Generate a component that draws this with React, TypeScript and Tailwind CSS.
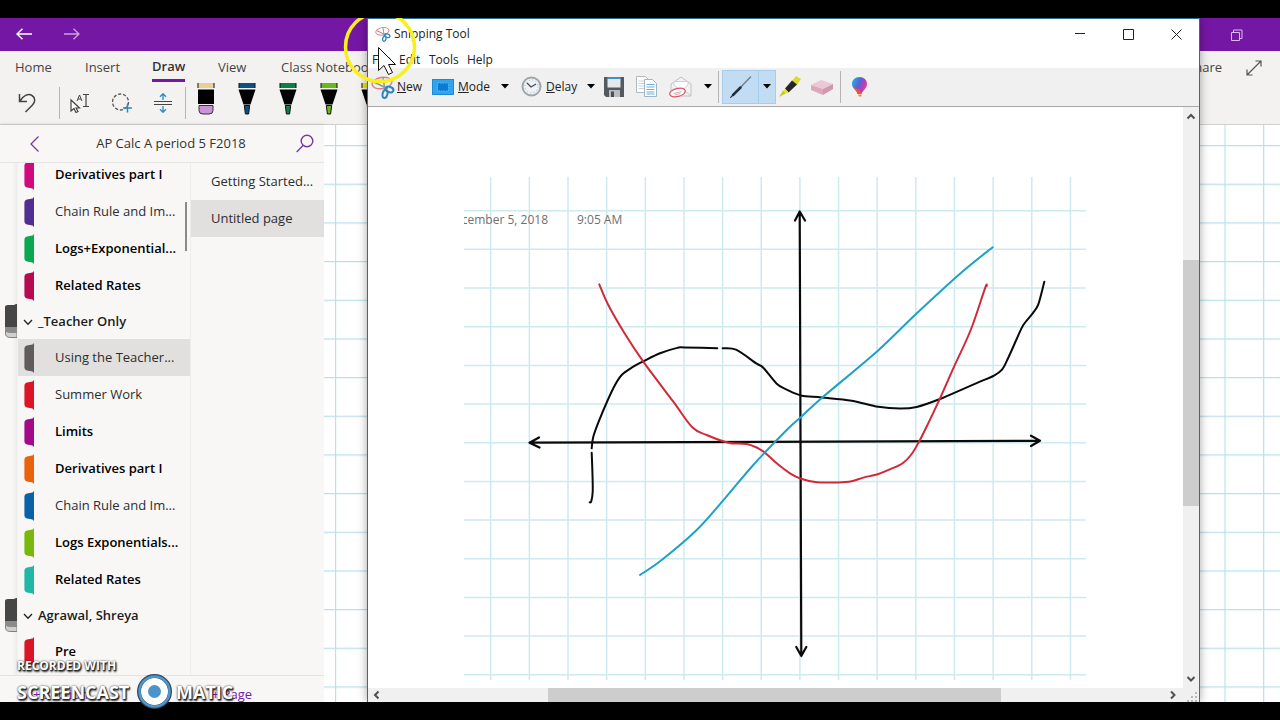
import type { ReactNode } from 'react'

type Point = [number, number]

const GRID = 38.67

// Catmull-Rom spline through the sampled ink points
function inkPath(points: Point[]) {
  let d = `M${points[0][0]} ${points[0][1]}`
  for (let i = 0; i < points.length - 1; i++) {
    const p0 = points[Math.max(i - 1, 0)]
    const p1 = points[i]
    const p2 = points[i + 1]
    const p3 = points[Math.min(i + 2, points.length - 1)]
    d += ` C${p1[0] + (p2[0] - p0[0]) / 6} ${p1[1] + (p2[1] - p0[1]) / 6} ${p2[0] - (p3[0] - p1[0]) / 6} ${p2[1] - (p3[1] - p1[1]) / 6} ${p2[0]} ${p2[1]}`
  }
  return d
}

const strokes: { color: string; points: Point[] }[] = [
  {
    color: '#0a0a0a',
    points: [[591.7, 448.3], [593.3, 436.7], [600, 418.3], [613.3, 388.3], [621.7, 375], [633.3, 366.7], [644, 361], [660, 353.3], [677.3, 347.9], [685, 347.5], [717.3, 348.3]],
  },
  {
    color: '#0a0a0a',
    points: [[722.7, 348.3], [736, 349.7], [756.7, 363.7], [763.3, 367.7], [776.7, 383.7], [786.7, 389.6], [801, 395.4], [821.7, 397.4], [851.7, 400.7], [878.3, 406.8], [900, 408.6], [916.7, 407], [940, 399], [960, 390.3], [980, 381.7], [993.3, 376], [1002, 369.7], [1008.3, 357.7], [1016.7, 339], [1023.3, 325], [1032.7, 313.3], [1038.3, 304.3], [1044.3, 281.7]],
  },
  { color: '#0a0a0a', points: [[591.7, 452.7], [592.5, 475], [592.7, 491.7], [591.3, 501.3], [589.7, 502.3]] },
  {
    color: '#d02a3a',
    points: [[599.3, 284.3], [608.3, 305], [625, 334], [644, 362.7], [673.3, 401.7], [692.3, 427.3], [706.7, 435], [728.3, 442.7], [746.7, 444], [758.3, 448.3], [765, 452.7], [776.7, 463.3], [790, 473.3], [801, 478.7], [816.7, 482.2], [838, 482.4], [851.7, 481.2], [863.3, 477.6], [878.3, 474], [890, 469.3], [902.7, 463.3], [911.7, 454], [919, 441.7], [925, 430], [940, 398.3], [953.3, 368.3], [970.7, 330], [985, 288.3], [986.7, 286]],
  },
  {
    color: '#1fa0c8',
    points: [[640, 575], [661.7, 560], [696.7, 530], [725, 498.3], [753.3, 465], [786.7, 430], [801, 417], [821.7, 398], [876.7, 351.7], [915, 315], [961.7, 272.3], [992.7, 247.3]],
  },
]

const sections = [
  { name: 'Derivatives part I', color: '#cf0a7c', bold: true },
  { name: 'Chain Rule and Im...', color: '#522e91' },
  { name: 'Logs+Exponential...', color: '#0ba84f', bold: true },
  { name: 'Related Rates', color: '#b80a50', bold: true },
  { name: '_Teacher Only', group: true },
  { name: 'Using the Teacher...', color: '#5f5c5b', selected: true },
  { name: 'Summer Work', color: '#dc1428' },
  { name: 'Limits', color: '#a20a8a', bold: true },
  { name: 'Derivatives part I', color: '#e8630c', bold: true },
  { name: 'Chain Rule and Im...', color: '#0a61a8' },
  { name: 'Logs Exponentials...', color: '#79b80a', bold: true },
  { name: 'Related Rates', color: '#1fb8a6', bold: true },
  { name: 'Agrawal, Shreya', group: true },
  { name: 'Pre', color: '#dc1428', bold: true },
]

const pens = ['#0b4f8a', '#0b8048', '#66bb1a', '#e8e80c']

function Separator() {
  return <div className="h-8 w-px shrink-0 bg-[#b4b4b4]" />
}

function IconButton({ label, className, children }: { label: string; className: string; children: ReactNode }) {
  return (
    <button type="button" aria-label={label} className={`flex shrink-0 items-center justify-center ${className}`}>
      {children}
    </button>
  )
}

function Pen({ color }: { color: string }) {
  return (
    <svg width="18" height="32" viewBox="0 0 18 32">
      <path d="M1 0h16v5H1z" fill={color} />
      <path d="M1 0v5M17 0v5" stroke="#111" strokeWidth="1" />
      <path d="M.500 6.500h17l-5 15h-7z" fill="#000" />
      <path d="M6.300 22.500h5.400L10.600 31H7.400z" fill={color} stroke="#111" strokeWidth="1" />
    </svg>
  )
}

function Scissors({ size }: { size: number }) {
  return (
    <svg width={size} height={size} viewBox="0 0 24 24" fill="none">
      <ellipse cx="11" cy="8" rx="10" ry="5.6" stroke="#e0807c" strokeWidth="1.4" transform="rotate(-10 11 8)" />
      <path d="M3 7l14 7M12 3l2 12" stroke="#8d9aa5" strokeWidth="1.6" />
      <ellipse cx="18.5" cy="14.5" rx="4" ry="2.6" stroke="#2f85bd" strokeWidth="2" transform="rotate(20 18.5 14.5)" />
      <ellipse cx="14" cy="19" rx="2.4" ry="4" stroke="#2f85bd" strokeWidth="2" transform="rotate(12 14 19)" />
    </svg>
  )
}

function DropArrow() {
  return (
    <svg width="8" height="5" viewBox="0 0 8 5" className="shrink-0">
      <path d="M0 0h8L4 4.5z" fill="#000" />
    </svg>
  )
}

function GroupIcon() {
  return (
    <svg width="12" height="35" viewBox="0 0 12 35" className="ml-[5px]">
      <path d="M.5 24v5c0 3 1 4 4 4.500H12V22z" fill="#cfcfcf" stroke="#808080" strokeWidth="1" />
      <path d="M0 20v6c1 2 2 3 5 3h7V18z" fill="#8b8b8b" />
      <path d="M0 3q0-2 3-2h6l3-1.500V23H0z" fill="#464646" />
    </svg>
  )
}

function SectionRow({ section }: { section: (typeof sections)[number] }) {
  if (section.group) {
    return (
      <li className="flex h-[35px] shrink-0 items-center">
        <div className="flex h-full w-[18px] shrink-0 items-center">
          <GroupIcon />
        </div>
        <button type="button" className="flex items-center gap-1 pl-1 font-semibold text-[#1c1c1c]">
          <svg width="12" height="12" viewBox="0 0 12 12" fill="none" stroke="#222" strokeWidth="1.3">
            <path d="M2 4l4 4.2L10 4" />
          </svg>
          {section.name}
        </button>
      </li>
    )
  }
  return (
    <li className="flex h-[37px] shrink-0">
      <div className="w-[18px] shrink-0" />
      <button
        type="button"
        className={`flex min-w-0 flex-1 items-center gap-[21px] pl-[6px] text-left whitespace-nowrap ${section.selected ? 'bg-[#e1e0df]' : ''} ${section.bold ? 'font-semibold text-black' : 'text-[#2d2d2d]'}`}
      >
        <svg width="10" height="30" viewBox="0 0 10 30" className="shrink-0">
          <path d="M10 0v30l-1.500-1.500-5.500-1C1.200 27 .4 26 .4 24V6C.4 4 1.200 3 3 2.500l5.500-1z" fill={section.color} />
        </svg>
        {section.name}
      </button>
    </li>
  )
}

function GridPaper() {
  return (
    <svg className="h-full w-full">
      <defs>
        <pattern id="paper" width={GRID} height={GRID} x="11" y="20" patternUnits="userSpaceOnUse">
          <path d={`M0 .5H${GRID}M.5 0V${GRID}`} stroke="#b9e0ea" strokeWidth="1.4" />
        </pattern>
      </defs>
      <rect width="100%" height="100%" fill="#fff" />
      <rect width="100%" height="100%" fill="url(#paper)" />
    </svg>
  )
}

function OneNote() {
  return (
    <div className="flex h-full flex-col bg-[#f3f2f1]">
      <header className="flex h-[33px] shrink-0 items-center justify-between bg-[#7417a5]">
        <div className="flex gap-8 pb-px pl-4">
          <IconButton label="Back" className="size-4">
            <svg width="16" height="12" viewBox="0 0 16 12" fill="none" stroke="#fff" strokeWidth="1.5">
              <path d="M16 6H1M6.500.7L1 6l5.500 5.300" />
            </svg>
          </IconButton>
          <IconButton label="Forward" className="size-4">
            <svg width="16" height="12" viewBox="0 0 16 12" fill="none" stroke="#cda3e0" strokeWidth="1.3">
              <path d="M0 6h15M9.500.7L15 6l-5.500 5.300" />
            </svg>
          </IconButton>
        </div>
        <div className="flex gap-9 overflow-hidden">
          <IconButton label="Restore" className="size-3">
            <svg width="12" height="12" viewBox="0 0 12 12" fill="none" stroke="#dcb8ec" strokeWidth="1">
              <path d="M.5 3.500h8v8h-8zM2.500 3.500v-2.500h8.500v8.500H8.500" />
            </svg>
          </IconButton>
          <div className="w-px" />
        </div>
      </header>
      <nav className="flex h-[31px] shrink-0 items-center justify-between pt-[2px] text-[13px] text-[#444]">
        <div className="flex h-full items-center pl-[15px]">
          <button type="button" className="w-[70px] text-left">Home</button>
          <button type="button" className="w-[67px] text-left">Insert</button>
          <div className="flex h-full w-[66px]">
            <button type="button" className="border-b-[3px] border-[#7417a5] pt-px font-semibold text-[#333]">
              Draw
            </button>
          </div>
          <button type="button" className="w-[63px] text-left">View</button>
          <button type="button" className="whitespace-nowrap">Class Notebook</button>
        </div>
        <div className="flex items-center gap-6 pr-[18px]">
          <button type="button">Share</button>
          <IconButton label="Full screen" className="size-4">
            <svg width="16" height="16" viewBox="0 0 16 16" fill="none" stroke="#555" strokeWidth="1.2">
              <path d="M1 15L15 1M9.500 1H15v5.500M1 9.500V15h5.500" />
            </svg>
          </IconButton>
        </div>
      </nav>
      <div className="flex h-[43px] shrink-0 items-center border-b border-[#d2d0ce]">
        <IconButton label="Undo" className="ml-[18px] mr-[23px] size-[18px]">
          <svg width="18" height="20" viewBox="0 0 18 20" fill="none" stroke="#444" strokeWidth="1.5">
            <path d="M1.500 1v7.500H9M2 8C5 3 10 0 14 2.500c4 2.500 3 7 .5 9.500L7.500 19" />
          </svg>
        </IconButton>
        <Separator />
        <IconButton label="Select text" className="ml-[10px] mr-[22px] size-5">
          <svg width="20" height="20" viewBox="0 0 20 20" fill="none" stroke="#444" strokeWidth="1.2">
            <path d="M1 7v11l3-2.500 2 4 2-1-2-3.500h3.500z" fill="#fff" />
            <path d="M7 8L9.500 2 12 8M8 6h3" strokeWidth="1" />
            <path d="M13 1.500h6M13 13.500h6M16 1.500v12" />
          </svg>
        </IconButton>
        <IconButton label="Lasso select" className="mr-[21px] size-5">
          <svg width="20" height="20" viewBox="0 0 20 20" fill="none">
            <circle cx="8.500" cy="9" r="8" stroke="#555" strokeWidth="1.300" strokeDasharray="3.200 1.800" />
            <path d="M15.500 10.500v9M11 15h9" stroke="#2b88c8" strokeWidth="1.500" />
          </svg>
        </IconButton>
        <IconButton label="Insert space" className="mr-[12px] size-5">
          <svg width="20" height="20" viewBox="0 0 20 20" fill="none">
            <path d="M1 8.500h18M1 11.500h18" stroke="#444" strokeWidth="1.200" />
            <path d="M10 7V1M7 3.700L10 .7l3 3M10 13v6M7 16.300l3 3 3-3" stroke="#2b88c8" strokeWidth="1.300" />
          </svg>
        </IconButton>
        <Separator />
        <div className="flex gap-[23px] self-start pl-[11px] pt-px">
          <IconButton label="Eraser" className="w-[18px]">
            <svg width="18" height="32" viewBox="0 0 18 32">
              <path d="M1 0h16v5H1z" fill="#e8cf94" />
              <path d="M1 0v5M17 0v5" stroke="#111" />
              <path d="M1 6.500h16V21H1z" fill="#000" />
              <path d="M2 22.500h14v5q0 3.500-4 3.500H6q-4 0-4-3.500z" fill="#cb93d6" stroke="#333" />
            </svg>
          </IconButton>
          {pens.map((color) => (
            <IconButton key={color} label="Pen" className="w-[18px]">
              <Pen color={color} />
            </IconButton>
          ))}
        </div>
      </div>
      <div className="flex min-h-0 flex-1">
        <aside className="flex w-[324px] shrink-0 flex-col bg-[#f8f7f6] text-[13px] shadow-[1px_0_4px_rgba(0,0,0,0.15)]">
          <div className="flex h-[38px] shrink-0 items-center justify-between border-b border-[#e6e5e4] pl-[28px] pr-[10px]">
            <IconButton label="Show notebooks" className="size-3">
              <svg width="9" height="16" viewBox="0 0 9 16" fill="none" stroke="#7a3a9c" strokeWidth="1.300" className="shrink-0">
                <path d="M8.500.5L1 8l7.500 7.500" />
              </svg>
            </IconButton>
            <h1 className="pt-px pl-[6px] text-[#333]">AP Calc A period 5 F2018</h1>
            <IconButton label="Search" className="size-[18px]">
              <svg width="18" height="19" viewBox="0 0 18 19" fill="none" stroke="#7a3a9c" strokeWidth="1.400">
                <circle cx="11" cy="7" r="5.800" />
                <path d="M7 11.500L.7 18" />
              </svg>
            </IconButton>
          </div>
          <div className="flex min-h-0 flex-1">
            <div className="relative flex w-[190px] shrink-0 overflow-hidden bg-linear-to-r from-[#f8f7f6] from-[12px] to-[#f8f7f6] to-[18px] via-[#ececeb] via-[17px]">
              <ul className="-mt-[7px] w-full">
                {sections.map((section, i) => (
                  <SectionRow key={i} section={section} />
                ))}
              </ul>
              <div className="absolute top-[39px] right-[3px] h-[49px] w-[2px] bg-[#8a8a8a]" />
            </div>
            <ul className="flex-1 border-l border-[#ececeb] text-[#2d2d2d]">
              <li className="flex h-[37px] items-center pl-5">
                <a href="#getting-started">Getting Started...</a>
              </li>
              <li className="flex h-[37px] items-center bg-[#e1e0df] pl-5">
                <a href="#untitled">Untitled page</a>
              </li>
            </ul>
          </div>
          <div className="flex h-[27px] shrink-0 items-end border-t border-[#e3e2e1] pb-px pl-[33px] text-[#7719aa]">
            <div className="flex-1">
              <button type="button" className="block leading-[14px]">+ Section</button>
            </div>
            <button type="button" className="mr-[72px] block leading-[14px]">+ Page</button>
          </div>
        </aside>
        <div className="min-w-0 flex-1">
          <GridPaper />
        </div>
      </div>
    </div>
  )
}

function Drawing() {
  const cols = Array.from({ length: 16 }, (_, i) => 490.7 + i * 38.65)
  const rows = Array.from({ length: 13 }, (_, i) => 210.7 + i * 38.67)
  return (
    <svg width="622" height="503" viewBox="464 177 622 503" fill="none" className="shrink-0">
      <g stroke="#cdeaf1" strokeWidth="1.500">
        {cols.map((x) => (
          <path key={x} d={`M${x} 177V680`} />
        ))}
        {rows.map((y) => (
          <path key={y} d={`M464 ${y}H1086`} />
        ))}
      </g>
      <text x="548" y="224" textAnchor="end" fontSize="12" fill="#707070">
        cember 5, 2018
      </text>
      <text x="577" y="224" fontSize="12" fill="#707070">
        9:05 AM
      </text>
      <g stroke="#0a0a0a" strokeWidth="2.200" strokeLinecap="round" strokeLinejoin="round">
        <path d="M529.500 442.700L1040 440.700M539 437.500L529.500 442.700 539.500 447.500M1031 435.700L1040 440.700 1031 446" />
        <path d="M799.700 211.500L801.300 656M795 220.500L799.700 211.500 805 220.500M796.300 647L801.300 656 806.300 647" />
      </g>
      {strokes.map((stroke, i) => (
        <path key={i} d={inkPath(stroke.points)} stroke={stroke.color} strokeWidth="2" strokeLinecap="round" strokeLinejoin="round" />
      ))}
    </svg>
  )
}

function SnippingTool() {
  return (
    <section className="absolute inset-y-0 right-[80px] left-[367px] flex flex-col border-x border-t border-[#2f6d99] bg-white text-[12px] text-[#222] shadow-[0_0_9px_rgba(0,0,0,0.35)]">
      <header className="flex h-[30px] shrink-0 items-center justify-between pr-[17px] pl-[7px]">
        <div className="flex items-center gap-[3px]">
          <Scissors size={16} />
          <h2>Snipping Tool</h2>
        </div>
        <div className="flex gap-[36px]">
          <IconButton label="Minimize" className="size-3">
            <svg width="10" height="10" viewBox="0 0 10 10" stroke="#222">
              <path d="M0 4.500h10" />
            </svg>
          </IconButton>
          <IconButton label="Maximize" className="size-3">
            <svg width="11" height="11" viewBox="0 0 11 11" stroke="#222" fill="none">
              <path d="M.5.5h10v10H.5z" />
            </svg>
          </IconButton>
          <IconButton label="Close" className="size-3">
            <svg width="11" height="11" viewBox="0 0 11 11" stroke="#222">
              <path d="M.5.5l10 10M10.500.5l-10 10" />
            </svg>
          </IconButton>
        </div>
      </header>
      <nav className="flex h-[19px] shrink-0 items-center pt-[2px] pl-1">
        <button type="button" className="w-[27px] text-left">File</button>
        <button type="button" className="w-[30px] text-left">Edit</button>
        <button type="button" className="w-[38px] text-left">Tools</button>
        <button type="button" className="text-left">Help</button>
      </nav>
      <div className="flex h-[39px] shrink-0 items-center border-b border-[#a8a8a8] bg-[#f0f0f0] pb-px pl-[3px]">
        <button type="button" className="flex w-[61px] items-center gap-[2px]">
          <Scissors size={24} />
          <span>
            <u>N</u>ew
          </span>
        </button>
        <button type="button" className="flex w-[89px] items-center gap-1">
          <svg width="22" height="16" viewBox="0 0 22 16" className="shrink-0">
            <path d="M0 0h22v16H0z" fill="#2fa5f0" />
            <path d="M.5.5h21v15H.5z" fill="none" stroke="#1e8ad6" />
            <path d="M5.500 4h11v8h-11z" fill="#0c7bd0" stroke="#5fb8f2" strokeDasharray="1.500 1" />
          </svg>
          <span className="w-[39px] text-left">
            <u>M</u>ode
          </span>
          <DropArrow />
        </button>
        <button type="button" className="flex w-[80px] items-center gap-1">
          <svg width="21" height="21" viewBox="0 0 21 21" className="shrink-0" fill="none">
            <circle cx="10.500" cy="10.500" r="9" fill="#eef2f4" stroke="#9fa6aa" strokeWidth="2" />
            <circle cx="10.500" cy="10.500" r="6.500" stroke="#9bb2bf" strokeDasharray="1 2.400" />
            <path d="M6 7l4 4 5-3" stroke="#445" strokeWidth="1.200" />
          </svg>
          <span className="w-[37px] text-left">
            <u>D</u>elay
          </span>
          <DropArrow />
        </button>
        <IconButton label="Save snip" className="w-[26px]">
          <svg width="20" height="20" viewBox="0 0 20 20">
            <path d="M0 0h20v20H2l-2-2z" fill="#555a60" />
            <path d="M3.500 1.500h13v9h-13z" fill="#e4e8ea" />
            <path d="M3.500 0h13v2h-13z" fill="#3e8fc4" />
            <path d="M5 13h11v7H5z" fill="#b9bdc0" />
            <path d="M7 14.500h3V20H7z" fill="#4b4f54" />
          </svg>
        </IconButton>
        <IconButton label="Copy" className="ml-[3px] w-[32px]">
          <svg width="21" height="21" viewBox="0 0 21 21" fill="#fff">
            <path d="M.5.5h9l3 3v13H.5z" stroke="#b0bac2" />
            <path d="M2.500 5h8M2.500 7.500h8M2.500 10h8M2.500 12.500h8" stroke="#c9d3da" />
            <path d="M8.500 3.500h8l4 4v13h-12z" stroke="#9cb4c6" />
            <path d="M10.500 8.500h8M10.500 11h8M10.500 13.500h8M10.500 16h8M10.500 18h8" stroke="#6faed6" />
          </svg>
        </IconButton>
        <button type="button" aria-label="Send snip" className="ml-[7px] flex w-[49px] items-center gap-[12px]">
          <svg width="23" height="22" viewBox="0 0 23 22" className="shrink-0">
            <path d="M2 8L12 1l10 7v12H2z" fill="#f3f3f3" stroke="#c0c0c0" />
            <path d="M5 9V5.500h14V9l-7 6z" fill="#fff" stroke="#d0d0d0" />
            <path d="M2 20l8-7h4l8 7" fill="none" stroke="#c4c4c4" />
            <ellipse cx="8.500" cy="16.500" rx="8" ry="4" fill="#fff" stroke="#d45a6c" strokeWidth="1.300" transform="rotate(-14 8.500 16.500)" />
            <path d="M4.500 17.500l8-2M5.500 19l6-1.500" stroke="#e3a4ac" />
          </svg>
          <DropArrow />
        </button>
        <Separator />
        <div className="ml-[3px] flex h-[34px] w-[54px] border border-[#a6cdec] bg-[#c2dcf3]">
          <IconButton label="Pen" className="w-9 border-r border-[#a6cdec]">
            <svg width="22" height="22" viewBox="0 0 22 22" strokeLinecap="round">
              <path d="M8 14L20.500 1" stroke="#77818a" strokeWidth="1.500" />
              <path d="M3 19L10.500 11.500" stroke="#20303e" strokeWidth="2.500" />
              <path d="M.700 21.300L3 19" stroke="#20303e" strokeWidth="1.200" />
            </svg>
          </IconButton>
          <IconButton label="Pen options" className="flex-1">
            <DropArrow />
          </IconButton>
        </div>
        <IconButton label="Highlighter" className="w-[28px]">
          <svg width="22" height="21" viewBox="0 0 22 21">
            <path d="M17 0l5 3-4 6-5-4z" fill="#d9dc2c" />
            <path d="M13 4.500l5 4-8.500 8L6 12.500z" fill="#262626" />
            <path d="M6 12.500l3.500 4-4 1.500-2.300 0z" fill="#e2e43a" />
            <path d="M4 14.500l2.500 3L0 21z" fill="#c6ca20" />
          </svg>
        </IconButton>
        <IconButton label="Eraser" className="w-[36px]">
          <svg width="22" height="16" viewBox="0 0 22 16">
            <path d="M0 6L10 1l12 4-10 5z" fill="#efc6d4" />
            <path d="M0 6l12 4v6L0 11z" fill="#dba7ba" />
            <path d="M12 10l10-5v5l-10 6z" fill="#cf98ad" />
          </svg>
        </IconButton>
        <Separator />
        <IconButton label="Edit with Paint 3D" className="w-[37px]">
          <svg width="15" height="20" viewBox="0 0 15 20">
            <defs>
              <linearGradient id="balloon" x1="0" y1=".2" x2="1" y2=".7">
                <stop offset="0" stopColor="#17b6e8" />
                <stop offset=".45" stopColor="#5b5fd8" />
                <stop offset=".75" stopColor="#c23bb4" />
                <stop offset="1" stopColor="#f0506a" />
              </linearGradient>
            </defs>
            <path d="M7.500 0C12 0 15 3 15 7c0 4.500-4 6-5.500 10h-4C5 13 0 11.500 0 7c0-4 3-7 7.500-7z" fill="url(#balloon)" />
            <path d="M1 10c2 2 5 1 7 3.500L9.500 17h-4C5 13.500 2.500 12.500 1 10z" fill="#f0503c" />
            <path d="M6 17.500h3.500v2H7z" fill="#f08a2c" />
          </svg>
        </IconButton>
      </div>
      <div className="flex min-h-0 flex-1">
        <div className="flex min-w-0 flex-1 items-start overflow-hidden pt-[70px] pl-[96px]">
          <Drawing />
        </div>
        <div className="flex w-4 shrink-0 flex-col items-center bg-[#f0f0f0] text-[#444]">
          <svg width="10" height="18" viewBox="0 0 10 18" fill="none" stroke="#505050" strokeWidth="2">
            <path d="M1.500 11.500L5 8l3.500 3.500" />
          </svg>
          <div className="flex w-full flex-1 flex-col">
            <div className="flex-[135]" />
            <div className="flex-[246] bg-[#cdcdcd]" />
            <div className="flex-[164]" />
          </div>
          <svg width="10" height="18" viewBox="0 0 10 18" fill="none" stroke="#505050" strokeWidth="2">
            <path d="M1.500 7L5 10.500 8.500 7" />
          </svg>
        </div>
      </div>
      <div className="flex h-[14px] shrink-0 items-center bg-[#f0f0f0]">
        <svg width="18" height="10" viewBox="0 0 18 10" fill="none" stroke="#505050" strokeWidth="2">
          <path d="M10.500 1.500L7 5l3.500 3.500" />
        </svg>
        <div className="flex h-full flex-1">
          <div className="flex-[162]" />
          <div className="flex-[452] bg-[#cdcdcd]" />
          <div className="flex-[164]" />
        </div>
        <svg width="18" height="10" viewBox="0 0 18 10" fill="none" stroke="#505050" strokeWidth="2">
          <path d="M6 1.500L9.500 5 6 8.500" />
        </svg>
        <svg width="16" height="14" viewBox="0 0 16 14" fill="#b8b8b8">
          <path d="M12 4h2v2h-2zM12 8h2v2h-2zM8 8h2v2H8zM12 12h2v2h-2zM8 12h2v2H8zM4 12h2v2H4z" />
        </svg>
      </div>
    </section>
  )
}

function Pointer() {
  return (
    <svg width="80" height="80" viewBox="340 7 80 80" fill="none" className="pointer-events-none absolute -top-[11px] left-[340px]">
      <circle cx="380" cy="47" r="34.500" stroke="#f7f01c" strokeWidth="3.500" />
      <path d="M378.500 47.500v23l5.500-5 4.500 9 4-2-4-8h7z" fill="#fff" stroke="#111" strokeWidth="1" />
    </svg>
  )
}

function Watermark() {
  return (
    <div className="absolute bottom-[11px] left-[17px] font-bold text-white [text-shadow:1px_1px_1px_#222,0_0_2px_#222,1px_2px_2px_#333]">
      <p className="text-[12px] leading-[16px]">RECORDED WITH</p>
      <div className="flex items-center gap-1 text-[18px] leading-[32px]">
        <span className="w-[116px]">SCREENCAST</span>
        <svg width="35" height="35" viewBox="0 0 35 35" className="shrink-0">
          <circle cx="17.500" cy="17.500" r="15.500" fill="#fff" stroke="#2e4a5e" strokeWidth="4" />
          <circle cx="17.500" cy="17.500" r="15" fill="none" stroke="#4f97cc" strokeWidth="2.500" />
          <circle cx="17.500" cy="17.500" r="6.500" fill="#4b93cb" />
        </svg>
        <span>MATIC</span>
      </div>
    </div>
  )
}

export default function App() {
  return (
    <div className="relative h-screen overflow-hidden bg-black py-[18px] font-['Open_Sans',sans-serif]">
      <main className="relative h-full overflow-hidden">
        <OneNote />
        <SnippingTool />
        <Pointer />
      </main>
      <Watermark />
    </div>
  )
}
